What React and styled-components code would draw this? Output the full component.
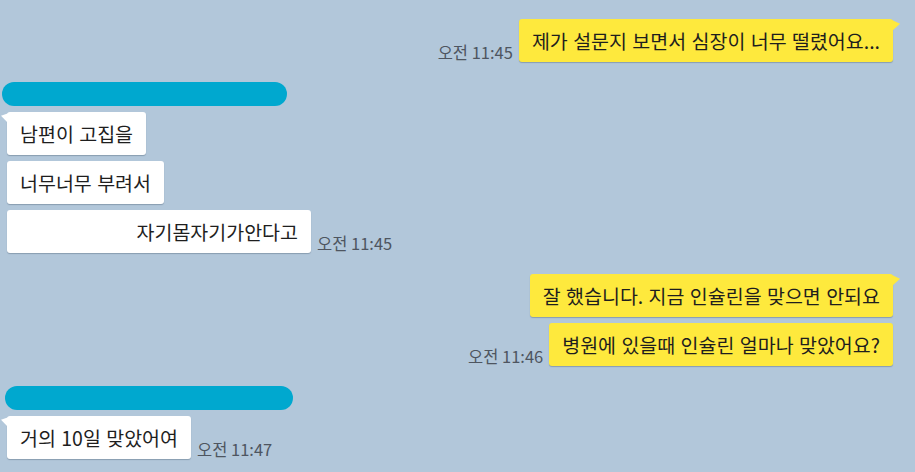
import React from "react";
import styled, { createGlobalStyle } from "styled-components";

const GlobalStyle = createGlobalStyle`
  html, body {
    margin: 0;
    padding: 0;
    background: #b2c7da;
  }
  body {
    font-family: "Noto Sans CJK KR", "Liberation Sans", sans-serif;
  }
`;

const messages = [
  { side: "me", time: "오전 11:45", items: [{ text: "제가 설문지 보면서 심장이 너무 떨렸어요..." }] },
  {
    side: "other",
    time: "오전 11:45",
    barWidth: 285,
    items: [
      { text: "남편이 고집을" },
      { text: "너무너무 부려서" },
      { text: "자기몸자기가안다고", width: 304 },
    ],
  },
  {
    side: "me",
    time: "오전 11:46",
    items: [{ text: "잘 했습니다. 지금 인슐린을 맞으면 안되요" }, { text: "병원에 있을때 인슐린 얼마나 맞았어요?" }],
  },
  { side: "other", time: "오전 11:47", barWidth: 288, barOffset: 3, items: [{ text: "거의 10일 맞았어여" }] },
];

const App = () => {
  return (
    <>
      <GlobalStyle />
      <Chat>
        {messages.map((group, gi) => (
          <Group key={gi} $side={group.side}>
            {group.side === "other" && <NameBar $width={group.barWidth} $offset={group.barOffset || 0} />}
            {group.items.map((item, i) => {
              const last = i === group.items.length - 1;
              return (
                <Row key={i} $side={group.side}>
                  {last && group.side === "me" && <Time>{group.time}</Time>}
                  <Bubble $side={group.side} $tail={i === 0} $width={item.width}>
                    {item.text}
                  </Bubble>
                  {last && group.side === "other" && <Time>{group.time}</Time>}
                </Row>
              );
            })}
          </Group>
        ))}
      </Chat>
    </>
  );
};

const Chat = styled.div`
  display: flex;
  flex-direction: column;
  padding: 19px 22px 0 7px;
  height: 472px;
  box-sizing: border-box;
  overflow: hidden;
`;

const Group = styled.div`
  display: flex;
  flex-direction: column;
  gap: 6px;
  align-items: ${(p) => (p.$side === "me" ? "flex-end" : "flex-start")};
  margin-bottom: ${(p) => (p.$side === "me" ? "20px" : "21px")};
`;

const NameBar = styled.div`
  width: ${(p) => p.$width}px;
  height: 24px;
  border-radius: 12px;
  background: #00a8cf;
  margin-left: ${(p) => p.$offset - 5}px;
`;

const Row = styled.div`
  display: flex;
  align-items: flex-end;
  gap: 6px;
`;

const Bubble = styled.div`
  position: relative;
  box-sizing: border-box;
  width: ${(p) => (p.$width ? `${p.$width}px` : "auto")};
  text-align: ${(p) => (p.$width ? "right" : "left")};
  padding: 10px 13px;
  font-size: 19.5px;
  line-height: 23px;
  word-spacing: 1px;
  color: #1e1e1e;
  white-space: nowrap;
  border-radius: 3px;
  background: ${(p) => (p.$side === "me" ? "#fee93d" : "#ffffff")};
  box-shadow: 0 1px 1px rgba(60, 80, 100, 0.35);

  &::after {
    content: "";
    display: ${(p) => (p.$tail ? "block" : "none")};
    position: absolute;
    top: 1px;
    width: 8px;
    height: 11px;
    background: inherit;
    ${(p) =>
      p.$side === "me"
        ? "right: -7px; clip-path: polygon(0 0, 100% 35%, 0 100%);"
        : "left: -6px; clip-path: polygon(100% 0, 0 25%, 100% 100%);"}
  }
`;

const Time = styled.span`
  font-size: 16.5px;
  line-height: 18px;
  color: #4e5560;
  margin-bottom: 1px;
  white-space: nowrap;
`;

export default App;
